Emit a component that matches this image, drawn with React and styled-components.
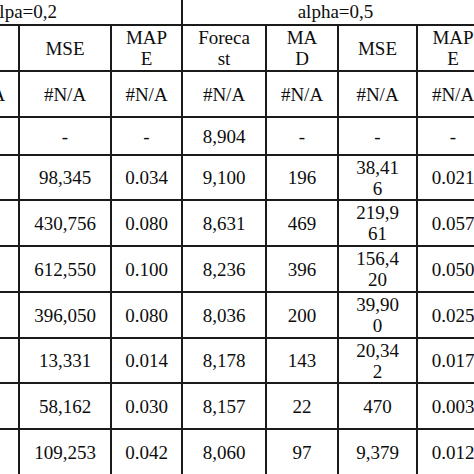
import React from 'react';
import styled, { createGlobalStyle } from 'styled-components';

const GlobalStyle = createGlobalStyle`
  html, body {
    margin: 0;
    padding: 0;
    background: #fff;
    font-family: "Liberation Serif", "DejaVu Serif", serif;
  }
`;

const Frame = styled.div`
  width: 474px;
  height: 474px;
  overflow: hidden;
  background: #fff;
`;

const Table = styled.table`
  border-collapse: collapse;
  table-layout: fixed;
  width: ${(p) => p.$w}px;
  margin: -8px 0 0 -135px;
`;

const Row = styled.tr`
  height: ${(p) => p.$h}px;
`;

const Cell = styled.td`
  border: 2px solid #1a1a1a;
  padding: 0;
  text-align: center;
  vertical-align: middle;
  white-space: nowrap;
  overflow: hidden;
  font-family: "Liberation Serif", "DejaVu Serif", serif;
  font-size: 19px;
  line-height: 21px;
  color: #0d0d0d;
`;

const GroupCell = styled(Cell)`
  padding-top: 4px;
`;

// column widths, alpha=0,2 then alpha=0,5
const widths = [83, 70, 92, 71, 84, 72, 79, 72];
const total = widths.reduce((a, b) => a + b, 0);

const heads = ['Foreca\nst', 'MA\nD', 'MSE', 'MAP\nE', 'Foreca\nst', 'MA\nD', 'MSE', 'MAP\nE'];

const rows = [
  { h: 46, cells: ['#N/A', '#N/A', '#N/A', '#N/A', '#N/A', '#N/A', '#N/A', '#N/A'] },
  { h: 38, cells: ['8,904', '-', '-', '-', '8,904', '-', '-', '-'] },
  { h: 45, cells: ['9,008', '314', '98,345', '0.034', '9,100', '196', '38,41\n6', '0.021'] },
  { h: 46, cells: ['8,889', '656', '430,756', '0.080', '8,631', '469', '219,9\n61', '0.057'] },
  { h: 46, cells: ['8,847', '783', '612,550', '0.100', '8,236', '396', '156,4\n20', '0.050'] },
  { h: 46, cells: ['8,786', '629', '396,050', '0.080', '8,036', '200', '39,90\n0', '0.025'] },
  { h: 45, cells: ['8,745', '115', '13,331', '0.014', '8,178', '143', '20,34\n2', '0.017'] },
  { h: 46, cells: ['8,707', '241', '58,162', '0.030', '8,157', '22', '470', '0.003'] },
  { h: 46, cells: ['8,669', '331', '109,253', '0.042', '8,060', '97', '9,379', '0.012'] },
];

function Lines({ text }) {
  const parts = text.split('\n');
  return parts.map((t, i) => (
    <React.Fragment key={i}>
      {t}
      {i < parts.length - 1 && <br />}
    </React.Fragment>
  ));
}

export default function App() {
  return (
    <>
      <GlobalStyle />
      <Frame>
        <Table $w={total}>
          <colgroup>
            {widths.map((w, i) => (
              <col key={i} style={{ width: w }} />
            ))}
          </colgroup>
          <tbody>
            <Row $h={32}>
              <GroupCell colSpan={4}>alpa=0,2</GroupCell>
              <GroupCell colSpan={4}>alpha=0,5</GroupCell>
            </Row>
            <Row $h={46}>
              {heads.map((h, i) => (
                <Cell key={i}>
                  <Lines text={h} />
                </Cell>
              ))}
            </Row>
            {rows.map((r, ri) => (
              <Row key={ri} $h={r.h}>
                {r.cells.map((c, ci) => (
                  <Cell key={ci}>
                    <Lines text={c} />
                  </Cell>
                ))}
              </Row>
            ))}
          </tbody>
        </Table>
      </Frame>
    </>
  );
}
